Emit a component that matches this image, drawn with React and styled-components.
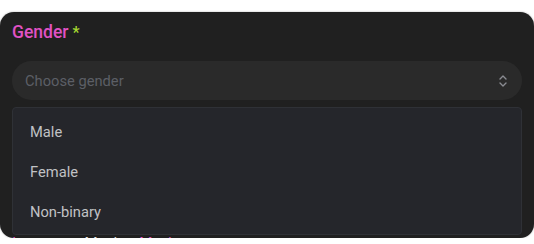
import styled, { createGlobalStyle } from "styled-components";

const GlobalStyle = createGlobalStyle`
  body {
    margin: 0;
    background: #ffffff;
    font-family: Roboto, "Liberation Sans", sans-serif;
  }
`;

const Page = styled.div`
  padding-top: 12px;
  width: 534px;
`;

const Card = styled.div`
  position: relative;
  box-sizing: border-box;
  width: 534px;
  height: 226px;
  padding: 8px 12px 0;
  background: #202020;
  border-radius: 14px;
  box-shadow: 0 0 2px rgba(0, 0, 0, 0.35);
  overflow: hidden;
`;

const Label = styled.label`
  display: flex;
  align-items: center;
  gap: 4px;
  font-size: 17.5px;
  font-weight: 500;
  color: #e052c5;
  height: 24px;
`;

const Star = styled.span`
  color: #a6d930;
  font-size: 16px;
`;

const Trigger = styled.div`
  margin-top: 17px;
  height: 39px;
  border-radius: 20px;
  background: #2a2a2a;
  display: flex;
  align-items: center;
  justify-content: space-between;
  padding: 0 13px;
  font-size: 14.7px;
  color: #5c5f66;
`;

const NextField = styled.div`
  margin-top: 134px;
  display: flex;
  gap: 14px;
  font-size: 15px;
  color: #e052c5;
`;

const Listbox = styled.ul`
  position: absolute;
  left: 12px;
  right: 12px;
  top: 95px;
  height: 128px;
  margin: 0;
  padding: 4px 0;
  box-sizing: border-box;
  list-style: none;
  background: #25262b;
  border: 1px solid #2f3136;
  border-radius: 4px;
`;

const Option = styled.li`
  height: 40px;
  display: flex;
  align-items: center;
  padding-left: 17px;
  font-size: 14.7px;
  color: #c1c2c5;
`;

function ChevronUpDown() {
  return (
    <svg width="12" height="14" viewBox="0 0 12 14" fill="none">
      <path
        d="M3 5 L6 2 L9 5 M3 9 L6 12 L9 9"
        stroke="#8a8c92"
        strokeWidth="1.4"
        strokeLinecap="round"
        strokeLinejoin="round"
      />
    </svg>
  );
}

const options = ["Male", "Female", "Non-binary"];

export default function App() {
  return (
    <Page>
      <GlobalStyle />
      <Card>
        <Label>
          Gender <Star>*</Star>
        </Label>
        <Trigger>
          <span>Choose gender</span>
          <ChevronUpDown />
        </Trigger>
        <NextField>
          <span>Interests</span>
          <span style={{ color: "#e0e0e0" }}>Music</span>
          <span>Movies</span>
        </NextField>
        <Listbox>
          {options.map((o) => (
            <Option key={o}>{o}</Option>
          ))}
        </Listbox>
      </Card>
    </Page>
  );
}
